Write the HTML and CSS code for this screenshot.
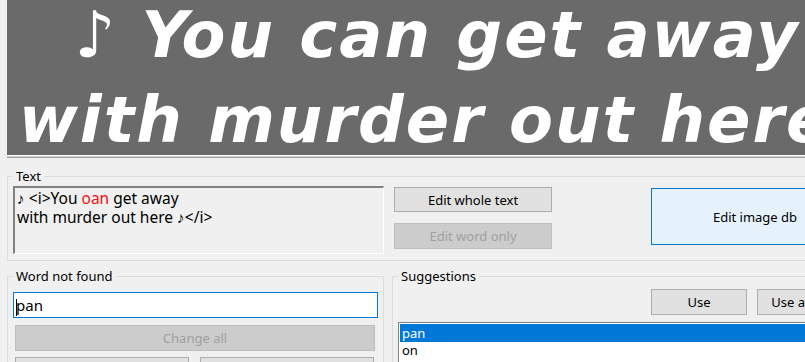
FILE: index.html
```html
<!DOCTYPE html>
<html lang="en">
<head>
    <meta charset="UTF-8">
    <meta name="viewport" content="width=device-width, initial-scale=1.0">
    <title>Spell check</title>
    <link rel="stylesheet" href="styles.css">
</head>
<body>
    <div class="window">
        <!-- Subtitle image preview -->
        <div class="preview">
            <div class="preview-text">♪ You can get away<br>with murder out here</div>
        </div>
        <div class="splitter"></div>

        <!-- Text -->
        <fieldset class="group group-text">
            <legend>Text</legend>
            <div class="text-row">
                <div class="memo">♪ &lt;i&gt;You <span class="misspelled">oan</span> get away<br>with murder out here ♪&lt;/i&gt;</div>
                <div class="btn-column">
                    <button type="button" class="btn">Edit whole text</button>
                    <button type="button" class="btn" disabled>Edit word only</button>
                </div>
                <button type="button" class="btn btn-focus btn-image-db">Edit image db</button>
            </div>
        </fieldset>

        <div class="lower">
            <!-- Word not found -->
            <fieldset class="group group-word">
                <legend>Word not found</legend>
                <div class="input"><span class="caret"></span>pan</div>
                <button type="button" class="btn btn-wide" disabled>Change all</button>
                <div class="btn-pair">
                    <button type="button" class="btn">Change</button>
                    <button type="button" class="btn">Skip once</button>
                </div>
            </fieldset>

            <!-- Suggestions -->
            <fieldset class="group group-sugg">
                <legend>Suggestions</legend>
                <div class="sugg-buttons">
                    <button type="button" class="btn btn-use">Use</button>
                    <button type="button" class="btn btn-use-always">Use always</button>
                </div>
                <ul class="listbox">
                    <li class="selected">pan</li>
                    <li>on</li>
                    <li>an</li>
                </ul>
            </fieldset>
        </div>
    </div>
</body>
</html>
```

FILE: styles.css
```css
html, body {
    margin: 0;
    height: 100%;
}
body {
    background-color: #f0f0f0;
    font-family: "Noto Sans", "Open Sans", sans-serif;
    font-size: 13px;
    color: #000;
    overflow: hidden;
}
.window {
    width: 836px;
    padding-left: 7px;
}
.preview {
    height: 155px;
    background-color: #6a6a6a;
    display: flex;
    align-items: center;
    justify-content: center;
}
.preview-text {
    color: #fff;
    font-family: "DejaVu Sans", sans-serif;
    font-weight: bold;
    font-style: italic;
    font-size: 64px;
    letter-spacing: 2px;
    line-height: 85px;
    text-align: center;
    text-indent: 24px;
    white-space: nowrap;
}
.splitter {
    height: 1px;
    border-top: 1px solid #fff;
    border-bottom: 1px solid #a0a0a0;
    background-color: #d0d0d0;
}
.group {
    margin: 0;
    padding: 2px 5px 6px;
    border: 1px solid #dcdcdc;
}
.group legend {
    padding: 0 3px;
    line-height: 15px;
}
.group-text {
    margin-top: 11px;
}
.text-row {
    display: flex;
    align-items: flex-start;
}
.memo {
    width: 366px;
    height: 64px;
    padding: 1px 0 0 2px;
    border-top: 2px solid #828282;
    border-left: 2px solid #828282;
    border-right: 1px solid #fff;
    border-bottom: 1px solid #fff;
    font-size: 15.5px;
    line-height: 19px;
    white-space: nowrap;
}
.misspelled {
    color: #f01010;
}
.btn-column {
    display: flex;
    flex-direction: column;
    gap: 11px;
    margin: 1px 0 0 10px;
}
.btn {
    font: inherit;
    color: #000;
    background-color: #e1e1e1;
    border: 1px solid #adadad;
    border-radius: 0;
    padding: 0;
    height: 26px;
}
.btn:disabled {
    background-color: #cccccc;
    border-color: #bfbfbf;
    color: #a0a0a0;
}
.btn-column .btn {
    width: 158px;
}
.btn-column .btn:first-child {
    height: 25px;
}
.btn-focus {
    background-color: #e5f1fb;
    border-color: #0078d7;
}
.btn-image-db {
    width: 208px;
    height: 57px;
    margin: 2px 0 0 99px;
}
.lower {
    display: flex;
    gap: 8px;
    margin-top: 8px;
}
.group-word {
    width: 365px;
    flex: none;
}
.input {
    height: 24px;
    width: 361px;
    border: 1px solid #0078d7;
    background-color: #fff;
    font-size: 15px;
    line-height: 24px;
    padding-left: 2px;
    margin-top: 6px;
}
.caret {
    display: inline-block;
    width: 1px;
    height: 17px;
    background-color: #000;
    vertical-align: -5px;
    margin-right: -1px;
}
.btn-wide {
    display: block;
    width: 360px;
    margin: 7px 0 0 2px;
}
.btn-pair {
    display: flex;
    gap: 11px;
    margin: 6px 0 0 2px;
}
.btn-pair .btn {
    width: 174px;
}
.group-sugg {
    flex: 1;
}
.sugg-buttons {
    display: flex;
    gap: 10px;
    margin: 3px 0 0 253px;
}
.btn-use {
    width: 96px;
}
.btn-use-always {
    width: 96px;
}
.listbox {
    list-style: none;
    margin: 7px 0 0;
    padding: 1px;
    border: 1px solid #828282;
    background-color: #fff;
    height: 80px;
}
.listbox li {
    line-height: 17px;
    padding-left: 2px;
}
.listbox li.selected {
    background-color: #0078d7;
    color: #fff;
    line-height: 18px;
}
```
